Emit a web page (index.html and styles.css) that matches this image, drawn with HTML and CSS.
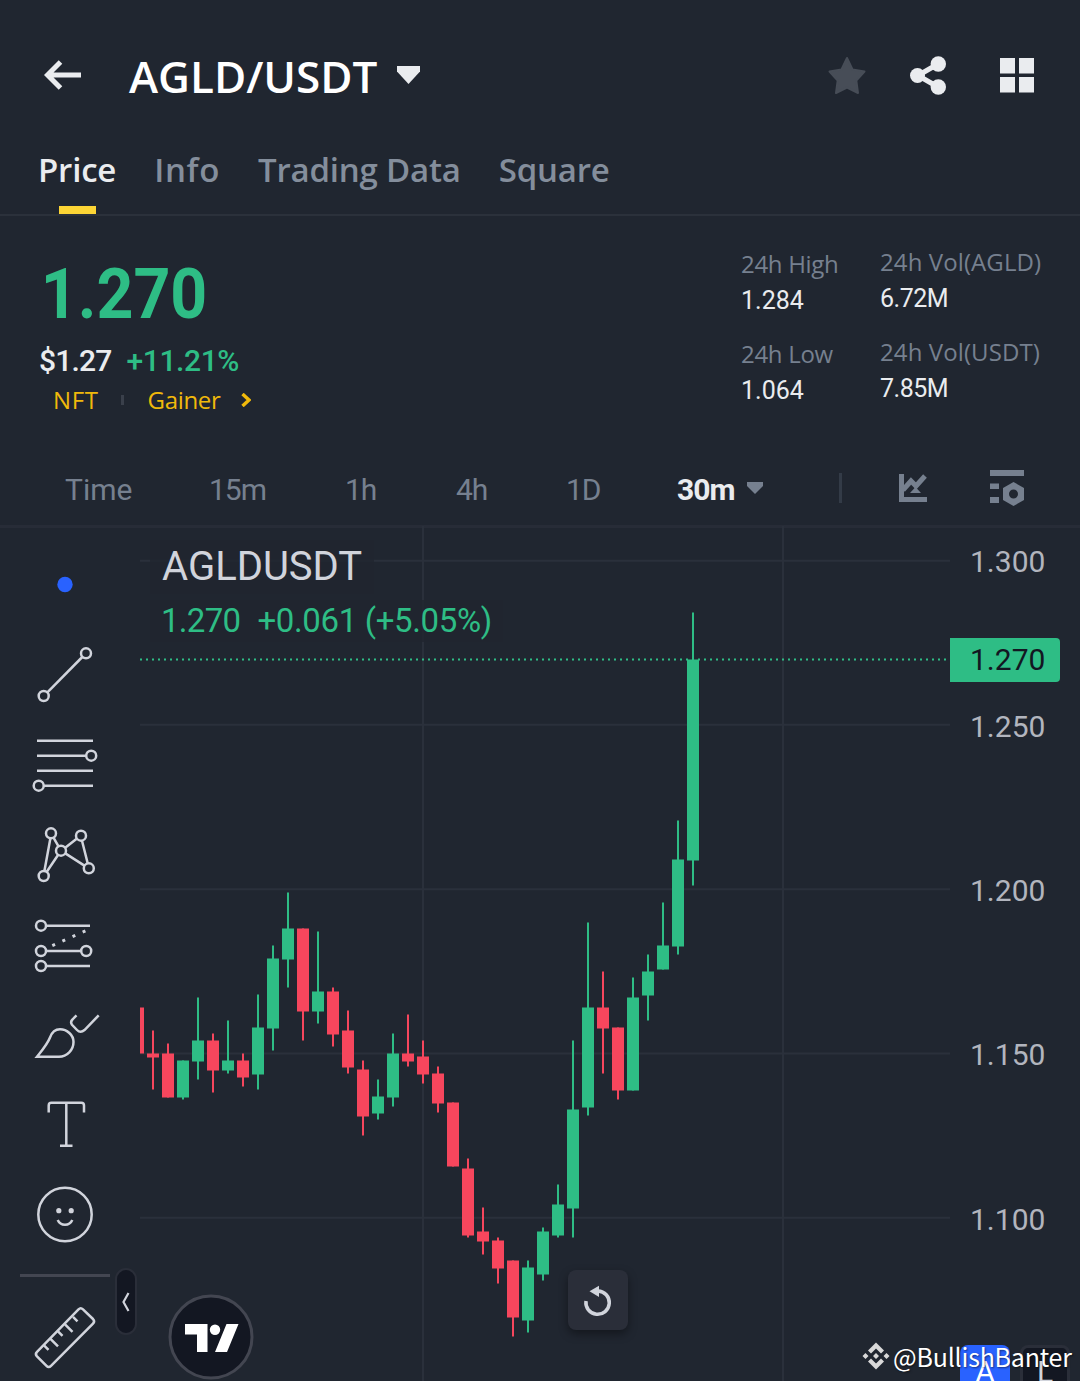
FILE: index.html
```html
<!DOCTYPE html>
<html lang="en">

<head>
    <meta charset="UTF-8">
    <meta name="viewport" content="width=device-width, initial-scale=1.0">
    <title>AGLD/USDT</title>
    <link rel="stylesheet" href="styles.css">
</head>

<body>
    <header class="header">
        <svg class="back" viewBox="0 0 38 30" width="38" height="30">
            <path d="M16.5 2 L3.5 15 L16.5 28 M3.5 15 H37" />
        </svg>
        <h1 class="pair">AGLD/USDT</h1>
        <svg class="pair-caret" viewBox="0 0 23 18" width="23" height="18">
            <path d="M0 0 H23 V5.5 L11.5 18 L0 5.5 Z" />
        </svg>
        <div class="actions">
            <svg class="star" viewBox="0 0 38 39" width="38" height="39">
                <path d="M19 2 L24.5 13.5 L36.5 15.5 L28.3 24.5 L30 37 L19 31.5 L8 37 L9.7 24.5 L1.5 15.5 L13.5 13.5 Z" />
            </svg>
            <svg class="share" viewBox="0 0 36 39" width="36" height="39">
                <path d="M8 19.5 L28 8 M8 19.5 L28 31" />
                <circle cx="7.5" cy="19.5" r="7.5" />
                <circle cx="28.3" cy="8" r="7.7" />
                <circle cx="28.3" cy="31" r="7.7" />
            </svg>
            <svg class="grid-icon" viewBox="0 0 34 35" width="34" height="35">
                <path d="M0 0 H15 V15.5 H0 Z M19 0 H34 V15.5 H19 Z M0 19 H15 V34.5 H0 Z M19 19 H34 V34.5 H19 Z" />
            </svg>
        </div>
    </header>

    <nav class="tabs">
        <a class="tab active" href="#">Price</a>
        <a class="tab info" href="#">Info</a>
        <a class="tab" href="#">Trading Data</a>
        <a class="tab" href="#">Square</a>
    </nav>

    <section class="summary">
        <div class="quote">
            <div class="last">1.270</div>
            <div class="change">
                <span class="usd">$1.27</span>
                <span class="percent">+11.21%</span>
            </div>
            <div class="tags">
                <span class="nft">NFT</span>
                <i class="tag-divider"></i>
                <span class="gainer">Gainer</span>
                <svg viewBox="0 0 10 14" width="10" height="14">
                    <path d="M1.5 1 L8 7 L1.5 13" />
                </svg>
            </div>
        </div>
        <dl class="stats">
            <dt>24h High</dt>
            <dd>1.284</dd>
            <dt>24h Low</dt>
            <dd>1.064</dd>
        </dl>
        <dl class="stats volume">
            <dt>24h Vol(AGLD)</dt>
            <dd>6.72M</dd>
            <dt>24h Vol(USDT)</dt>
            <dd>7.85M</dd>
        </dl>
    </section>

    <nav class="intervals">
        <a class="i-time" href="#">Time</a>
        <a class="i-15m" href="#">15m</a>
        <a class="i-1h" href="#">1h</a>
        <a class="i-4h" href="#">4h</a>
        <a class="i-1d" href="#">1D</a>
        <a class="i-30m active" href="#">30m</a>
        <svg class="interval-caret" viewBox="0 0 16 12" width="16" height="12">
            <path d="M0 0 H16 V4 L8 12 L0 4 Z" />
        </svg>
        <i class="interval-divider"></i>
        <svg class="indicator" viewBox="0 0 28 28" width="28" height="28">
            <path class="line" d="M2.5 0 V25.5 H28 M4 16 L12 7 L17 12 L26 2" />
            <path class="fill" d="M16.5 13 L22 19 H11 Z" />
        </svg>
        <svg class="settings" viewBox="0 0 34 36" width="34" height="36">
            <path d="M0 0 H34 V6 H0 Z M0 13.5 H9 V19 H0 Z M0 27 H9 V33 H0 Z" />
            <path fill-rule="evenodd" d="M23.5 12 L34 18 V30 L23.5 36 L13 30 V18 Z M23.5 19.5 A4.5 4.5 0 1 0 23.5 28.5 A4.5 4.5 0 1 0 23.5 19.5 Z" />
        </svg>
    </nav>

    <main class="chart">
        <aside class="tools">
            <svg viewBox="0 0 140 90">
                <circle class="dot" cx="65" cy="44.5" r="7.7" />
            </svg>
            <svg viewBox="0 0 140 90">
                <circle cx="86" cy="23.3" r="5" />
                <circle cx="43.7" cy="66" r="5" />
                <path d="M82.3 27 L47.4 62.3" />
            </svg>
            <svg viewBox="0 0 140 90">
                <path d="M37 20.7 H93 M37 35.7 H86 M37 50.7 H93 M43.5 65.7 H93" />
                <circle cx="91.2" cy="35.7" r="5" />
                <circle cx="38.7" cy="65.7" r="5" />
            </svg>
            <svg viewBox="0 0 140 90">
                <path d="M50.4 28.3 L44.4 61 M53.5 27.7 L58.5 36.3 M65.2 37.8 L77 28.5 M82 30.7 L87.7 53.3 M65.3 43.4 L84.4 55.6 M58.2 44.8 L46.6 62" />
                <circle cx="51" cy="23.3" r="5" />
                <circle cx="81" cy="25.7" r="5" />
                <circle cx="61" cy="40.7" r="5" />
                <circle cx="88.8" cy="58.3" r="5" />
                <circle cx="43.7" cy="66" r="5" />
            </svg>
            <svg viewBox="0 0 140 90">
                <path d="M46 25.7 H90 M46 51 H81 M46 66 H90" />
                <path d="M52.3 45.7 L86 30.5" stroke-width="3" stroke-dasharray="3 8.1" />
                <circle cx="41" cy="25.7" r="5" />
                <circle cx="41" cy="51" r="5" />
                <circle cx="86.2" cy="51" r="5" />
                <circle cx="41" cy="66" r="5" />
            </svg>
            <svg viewBox="0 0 140 90">
                <path d="M37 66.7 C44 58 47.5 54 50 47.5 C52 42 56 39.3 60 39.3 C67 39.3 73.5 45 73.5 52 C73.5 60 67 66.7 59 66.7 Z" />
                <path d="M76.5 25.3 L72.5 29.5 Q70 32 72 34.8 L77 40 Q80.5 43.5 84.5 40 L98.7 25.3" />
            </svg>
            <svg viewBox="0 0 140 90">
                <path d="M48.7 32.5 V25.5 Q48.7 22.8 51.4 22.8 H81.3 Q84 22.8 84 25.5 V32.5 M66.3 23 V65.7 M60 65.7 H72.5" />
            </svg>
            <svg viewBox="0 0 140 90">
                <circle cx="65" cy="44.5" r="26.7" />
                <circle class="eye" cx="58.8" cy="40.7" r="2.6" />
                <circle class="eye" cx="71.2" cy="40.7" r="2.6" />
                <path d="M57.7 50 A8 8 0 0 0 72.3 50" />
            </svg>
            <i class="tools-divider"></i>
            <svg viewBox="0 0 140 90">
                <path d="M78.5 18.3 Q80.7 16.1 83 18.3 L93 28 Q95.2 30.3 93 32.6 L51 74.8 Q48.7 77.1 46.5 74.8 L37 65.3 Q34.8 63 37 60.8 Z" />
                <path d="M44 54.3 L48.5 58.8 M50.5 47.8 L58 55.3 M58 40.3 L62.5 44.8 M65 33.3 L72.5 40.8 M73 25.8 L77.5 30.3" />
            </svg>
        </aside>

        <div class="plot">
            <svg class="candles" viewBox="140 526 810 855" width="810" height="855">
                <g class="grid">
                    <path d="M140 560.7 H950 M140 724.8 H950 M140 889.3 H950 M140 1053.5 H950 M140 1217.7 H950" />
                    <path d="M423 526 V1381 M783 526 V1381" />
                </g>
                <path class="last-line" d="M140 659.5 H950" />
                <g id="candles"></g>
            </svg>
            <div class="legend">
                <div class="symbol">AGLDUSDT</div>
                <div class="values">
                    <span class="value-last">1.270</span>
                    <span class="value-change">+0.061 (+5.05%)</span>
                </div>
            </div>
            <svg class="tv-logo" viewBox="0 0 86 86" width="86" height="86">
                <circle class="ring" cx="43" cy="43" r="41" />
                <path d="M17 30 H39.5 V58 H29 V40.5 H17 Z M58.5 30 H70.5 L59 58 H47 Z" />
                <circle cx="47" cy="35.7" r="5.2" />
            </svg>
            <div class="reset">
                <svg viewBox="0 0 60 60" width="60" height="60">
                    <path class="arc" d="M18 31 A11.7 11.7 0 1 0 30 20.9" />
                    <path class="head" d="M21.5 21.3 L31 15.7 V27 Z" />
                </svg>
            </div>
        </div>

        <div class="axis">
            <span class="p1300">1.300</span>
            <span class="p1250">1.250</span>
            <span class="p1200">1.200</span>
            <span class="p1150">1.150</span>
            <span class="p1100">1.100</span>
            <span class="last-label">1.270</span>
        </div>

        <div class="collapse">
            <svg viewBox="0 0 8 20" width="8" height="20">
                <path d="M6.5 1 L1.5 10 L6.5 19" />
            </svg>
        </div>
        <div class="scale auto">A</div>
        <div class="scale log">L</div>
        <div class="watermark">
            <svg viewBox="0 0 28 28" width="28" height="28">
                <path d="M14 0.5 L22 8.5 L19 11.5 L14 6.5 L9 11.5 L6 8.5 Z M14 27.5 L22 19.5 L19 16.5 L14 21.5 L9 16.5 L6 19.5 Z M14 11 L17 14 L14 17 L11 14 Z M3.5 11 L6.5 14 L3.5 17 L0.5 14 Z M24.5 11 L27.5 14 L24.5 17 L21.5 14 Z" />
            </svg>
            <span>@BullishBanter</span>
        </div>
    </main>
    <script src="script.js"></script>
</body>

</html>
```
FILE: styles.css
```css
* {
    margin: 0;
    padding: 0;
    box-sizing: border-box;
}

body {
    width: 1080px;
    height: 1381px;
    overflow: hidden;
    background-color: #202630;
    color: #eaecef;
    font-family: Roboto, "Liberation Sans", sans-serif;
}

svg {
    display: block;
    flex: none;
}

a {
    color: inherit;
    text-decoration: none;
}

/* Header */
.header {
    display: flex;
    align-items: center;
    height: 150px;
    padding: 0 46px 0 44px;
}

.back path {
    fill: none;
    stroke: #eaecef;
    stroke-width: 5;
}

.pair {
    width: 316px;
    padding: 2px 0 0 47px;
    font-family: "Open Sans", sans-serif;
    font-size: 44px;
    font-weight: 600;
    line-height: 60px;
    white-space: nowrap;
    color: #fff;
}

.pair-caret {
    margin-left: -1px;
}

.pair-caret path,
.grid-icon path,
.share circle {
    fill: #eaecef;
}

.actions {
    display: flex;
    align-items: center;
    margin-left: auto;
}

.star path {
    fill: #474d57;
    stroke: #474d57;
    stroke-width: 2;
    stroke-linejoin: round;
}

.share {
    margin: 0 54px 0 44px;
}

.share path {
    fill: none;
    stroke: #eaecef;
    stroke-width: 5;
}

/* Tabs */
.tabs {
    display: flex;
    gap: 38px;
    height: 66px;
    padding-left: 38px;
    border-bottom: 2px solid #2b313b;
}

.tab {
    position: relative;
    font-family: "Open Sans", sans-serif;
    font-size: 33px;
    font-weight: 600;
    line-height: 39px;
    letter-spacing: -0.2px;
    color: #848e9c;
    white-space: nowrap;
}

.tab.info {
    letter-spacing: 0.7px;
}

.tab.active {
    color: #eaecef;
}

.tab.active::after {
    content: "";
    position: absolute;
    left: 21px;
    bottom: 0;
    width: 37px;
    height: 8px;
    background-color: #fcd535;
}

/* Summary */
.summary {
    display: flex;
    height: 234px;
    padding: 30px 39px 0 39px;
}

.quote {
    flex: 1;
}

.last {
    padding-left: 2px;
    font-size: 70px;
    font-weight: 700;
    line-height: 96px;
    color: #2ebd85;
    transform: scaleX(0.92);
    transform-origin: left;
}

.change {
    display: flex;
    gap: 15px;
    font-size: 30px;
    font-weight: 500;
    line-height: 38px;
    letter-spacing: -0.4px;
}

.usd {
    letter-spacing: -0.8px;
}

.percent {
    color: #2ebd85;
}

.tags {
    display: flex;
    align-items: center;
    height: 40px;
    padding-left: 14px;
    font-family: "Open Sans", sans-serif;
    font-size: 24px;
    line-height: 38px;
    color: #f0b90b;
}

.tags span {
    margin-top: -1px;
}

.nft {
    letter-spacing: 0.6px;
}

.gainer {
    letter-spacing: -0.3px;
}

.tag-divider {
    width: 3px;
    height: 10px;
    margin: 0 23px;
    background-color: #3a404b;
}

.tags svg {
    margin-left: 20px;
}

.tags path {
    fill: none;
    stroke: #f0b90b;
    stroke-width: 3.4;
}

.stats {
    width: 139px;
    white-space: nowrap;
}

.stats.volume {
    width: 161px;
    margin-top: -2px;
}

.stats dt {
    font-family: "Open Sans", sans-serif;
    font-size: 24px;
    line-height: 36px;
    letter-spacing: -0.3px;
    color: #76808f;
}

.stats.volume dt {
    letter-spacing: 0.1px;
}

.stats dd {
    margin-bottom: 16px;
    font-size: 25px;
    line-height: 38px;
}

.stats.volume dd {
    letter-spacing: -0.5px;
}

/* Intervals */
.intervals {
    display: flex;
    align-items: center;
    height: 78px;
    padding-left: 65px;
    border-bottom: 3px solid #272c37;
    font-size: 30px;
    color: #76808f;
}

.intervals a {
    padding-top: 3px;
    letter-spacing: -1px;
}

.intervals .active {
    font-weight: 700;
    color: #eaecef;
}

.intervals .i-time {
    width: 144px;
    letter-spacing: 0;
}

.i-15m {
    width: 136px;
}

.i-1h {
    width: 111px;
}

.i-4h {
    width: 110px;
}

.i-1d {
    width: 111px;
}

.i-30m {
    width: 70px;
}

.interval-caret path,
.settings path,
.indicator .fill {
    fill: #76808f;
}

.indicator .line {
    fill: none;
    stroke: #76808f;
    stroke-width: 5;
}

.interval-divider {
    width: 3px;
    height: 30px;
    margin: 0 57px 0 76px;
    background-color: #333b47;
}

.settings {
    margin-left: 63px;
}

/* Chart */
.chart {
    position: relative;
    display: flex;
    height: 855px;
    margin-top: -2px;
}

.tools {
    display: flex;
    flex-direction: column;
    width: 140px;
    padding-top: 14px;
}

.tools svg {
    width: 140px;
    height: 90px;
    fill: none;
    stroke: #d1d4dc;
    stroke-width: 2.5;
}

.tools .dot {
    fill: #2962ff;
    stroke: none;
}

.tools .eye {
    fill: #d1d4dc;
    stroke: none;
}

.tools-divider {
    flex: none;
    width: 90px;
    height: 3px;
    margin: 14px 0 14px 20px;
    background-color: #434651;
}

.plot {
    position: relative;
    width: 810px;
}

.grid path {
    fill: none;
    stroke: #2a303b;
    stroke-width: 2;
}

.last-line {
    stroke: #2ebd85;
    stroke-width: 2;
    stroke-dasharray: 2 4;
}

.up {
    fill: #2ebd85;
}

.down {
    fill: #f6465d;
}

.legend {
    position: absolute;
    left: 10px;
    top: 14px;
}

.symbol,
.values {
    width: max-content;
    padding: 0 12px;
    background-color: rgba(32, 38, 48, 0.8);
    white-space: nowrap;
}

.symbol {
    font-size: 40px;
    line-height: 54px;
    color: #d1d4dc;
}

.values {
    display: flex;
    gap: 17px;
    margin-top: 6px;
    padding: 0 11px;
    font-size: 33px;
    line-height: 42px;
    color: #2ebd85;
}

.value-last {
    letter-spacing: -0.7px;
}

.value-change {
    letter-spacing: -0.35px;
}

.tv-logo {
    position: absolute;
    left: 28px;
    top: 768px;
    fill: #fff;
}

.tv-logo .ring {
    fill: #131722;
    stroke: #434651;
    stroke-width: 3;
}

.reset {
    position: absolute;
    left: 428px;
    top: 744px;
    width: 60px;
    height: 60px;
    border-radius: 8px;
    background-color: #2a2e39;
    box-shadow: 0 4px 10px rgba(0, 0, 0, 0.4);
}

.reset .arc {
    fill: none;
    stroke: #d1d4dc;
    stroke-width: 3.5;
}

.reset .head {
    fill: #d1d4dc;
}

/* Price scale */
.axis {
    position: relative;
    width: 130px;
    font-size: 30px;
    line-height: 44px;
    color: #b2b5be;
}

.axis span {
    position: absolute;
    left: 20px;
}

.p1300 {
    top: 14px;
}

.p1250 {
    top: 179px;
}

.p1200 {
    top: 343px;
}

.p1150 {
    top: 507px;
}

.p1100 {
    top: 672px;
}

.axis .last-label {
    left: 0;
    top: 112px;
    width: 110px;
    height: 44px;
    padding-left: 20px;
    border-radius: 0 4px 4px 0;
    background-color: #2ebd85;
    color: #131722;
}

.collapse {
    position: absolute;
    left: 115px;
    top: 742px;
    display: flex;
    align-items: center;
    justify-content: center;
    width: 22px;
    height: 67px;
    border: 2px solid #2a2e39;
    border-radius: 11px;
    background-color: #131722;
}

.collapse path {
    fill: none;
    stroke: #d1d4dc;
    stroke-width: 2.2;
}

.scale {
    position: absolute;
    top: 819px;
    width: 50px;
    height: 50px;
    border-radius: 8px;
    font-size: 30px;
    line-height: 54px;
    text-align: center;
}

.auto {
    left: 960px;
    background-color: #2962ff;
    color: #fff;
}

.log {
    left: 1020px;
    border: 3px solid #2a2e39;
    background-color: #131722;
    color: #d1d4dc;
    line-height: 48px;
}

/* Watermark */
.watermark {
    position: absolute;
    left: 862px;
    top: 811px;
    display: flex;
    align-items: center;
    gap: 3px;
    height: 38px;
    font-family: "Noto Sans CJK SC", "Noto Sans", sans-serif;
    font-size: 25px;
    line-height: 38px;
    letter-spacing: -0.2px;
    color: #fff;
    white-space: nowrap;
    text-shadow: 1px 1px 2px rgba(0, 0, 0, 0.5);
}

.watermark path {
    fill: #d9d9d9;
}
```
FILE: script.js
```js
// [x, high, body top, body bottom, low, direction]
const candles = [
    [138, 1007, 1007, 1054, 1054, 'down'],
    [153, 1030, 1053, 1058, 1090, 'down'],
    [168, 1043, 1053, 1098, 1098, 'down'],
    [183, 1060, 1060, 1098, 1100, 'up'],
    [198, 997, 1040, 1062, 1080, 'up'],
    [213, 1033, 1040, 1071, 1093, 'down'],
    [228, 1020, 1060, 1071, 1074, 'up'],
    [243, 1053, 1060, 1078, 1087, 'down'],
    [258, 994, 1027, 1075, 1090, 'up'],
    [273, 945, 958, 1029, 1051, 'up'],
    [288, 892, 928, 960, 988, 'up'],
    [303, 928, 928, 1012, 1041, 'down'],
    [318, 931, 991, 1012, 1024, 'up'],
    [333, 987, 991, 1035, 1047, 'down'],
    [348, 1010, 1030, 1068, 1074, 'down'],
    [363, 1060, 1069, 1117, 1136, 'down'],
    [378, 1079, 1096, 1114, 1120, 'up'],
    [393, 1033, 1053, 1098, 1107, 'up'],
    [408, 1014, 1053, 1062, 1067, 'down'],
    [423, 1040, 1056, 1075, 1084, 'down'],
    [438, 1066, 1073, 1104, 1113, 'down'],
    [453, 1102, 1102, 1167, 1167, 'down'],
    [468, 1158, 1168, 1236, 1238, 'down'],
    [483, 1207, 1231, 1242, 1255, 'down'],
    [498, 1237, 1240, 1269, 1284, 'down'],
    [513, 1260, 1260, 1318, 1337, 'down'],
    [528, 1260, 1267, 1321, 1333, 'up'],
    [543, 1227, 1231, 1275, 1281, 'up'],
    [558, 1184, 1204, 1236, 1238, 'up'],
    [573, 1040, 1109, 1209, 1238, 'up'],
    [588, 922, 1007, 1108, 1116, 'up'],
    [603, 971, 1007, 1029, 1074, 'down'],
    [618, 1027, 1027, 1091, 1100, 'down'],
    [633, 977, 997, 1091, 1091, 'up'],
    [648, 954, 971, 996, 1021, 'up'],
    [663, 902, 945, 970, 970, 'up'],
    [678, 820, 859, 947, 955, 'up'],
    [693, 612, 659, 861, 886, 'up']
];

document.getElementById('candles').innerHTML = candles.map(([x, high, top, bottom, low, dir]) => `
    <g class="${dir}">
        <rect x="${x - 1}" y="${high + 0.5}" width="2" height="${low - high - 1}" />
        <rect x="${x - 6}" y="${top + 0.5}" width="12" height="${bottom - top - 1}" />
    </g>`).join('');
```
